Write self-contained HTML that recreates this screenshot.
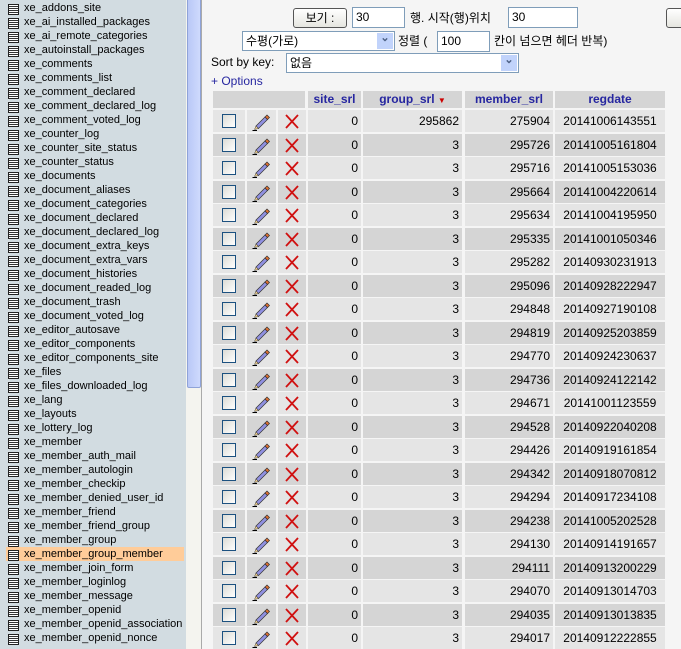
<!DOCTYPE html>
<html><head><meta charset="utf-8"><style>
*{margin:0;padding:0;box-sizing:border-box}
html,body{width:681px;height:649px;overflow:hidden}
body{position:relative;background:#f5f5f5;font-family:"Liberation Sans","Noto Sans CJK KR",sans-serif;font-size:11px;color:#000}
#left{position:absolute;left:0;top:0;width:186px;height:649px;background:#d2dce1;overflow:hidden}
#left div{position:absolute;left:6px;width:178px;height:14px;line-height:14px;padding-left:18px;white-space:nowrap}
#left div:before{content:"";position:absolute;left:2px;top:3px;width:9px;height:9px;border:1px solid #222;background:repeating-linear-gradient(#fff 0 1px,#333 1px 2px);}
#left div.hl{background:#ffcc99}
#sb{position:absolute;left:186px;top:0;width:16px;height:649px;background:#f4f4ef;border-right:1px solid #aaa}
#thumb{position:absolute;left:1px;top:-2px;width:14px;height:390px;background:linear-gradient(90deg,#b9c8f7,#cfdafd);border:1px solid #8fa3d8;border-radius:2px}
.a{position:absolute;white-space:nowrap}
.inp{position:absolute;background:#fff;border:1px solid #7f9db9;height:21px;line-height:19px;padding-left:3px;font-size:12px}
.btn{position:absolute;border:1px solid #555;border-radius:3px;background:linear-gradient(#fff,#e6e6e0);text-align:center;font-size:12px;line-height:18px}
.sel{position:absolute;background:#fff;border:1px solid #7f9db9;height:20px;line-height:18px;padding-left:3px;font-size:12px}
.sel:after{content:"⌄";position:absolute;right:1px;top:1px;width:16px;height:16px;background:#c1d3fb;color:#4d6185;font-size:11px;line-height:10px;text-align:center;font-weight:bold}
.r{position:absolute;left:213px;height:22px;width:453px}
.c{position:absolute;top:0;height:22px;line-height:22px;font-size:12px;text-align:right;padding-right:3px}
.r.o .c{background:#e5e5e5}.r.e .c{background:#d5d5d5}
.h{position:absolute;top:91px;height:17px;line-height:17px;background:#d5d5d5;color:#2626a0;font-weight:bold;font-size:12px;text-align:center}
.cb{position:absolute;left:9px;top:4px;width:14px;height:14px;border:1px solid #1c5180;background:linear-gradient(135deg,#dcdcd6,#fff)}
</style></head><body>
<div id="left">
<div style="top:1px">xe_addons_site</div><div style="top:15px">xe_ai_installed_packages</div><div style="top:29px">xe_ai_remote_categories</div><div style="top:43px">xe_autoinstall_packages</div><div style="top:57px">xe_comments</div><div style="top:71px">xe_comments_list</div><div style="top:85px">xe_comment_declared</div><div style="top:99px">xe_comment_declared_log</div><div style="top:113px">xe_comment_voted_log</div><div style="top:127px">xe_counter_log</div><div style="top:141px">xe_counter_site_status</div><div style="top:155px">xe_counter_status</div><div style="top:169px">xe_documents</div><div style="top:183px">xe_document_aliases</div><div style="top:197px">xe_document_categories</div><div style="top:211px">xe_document_declared</div><div style="top:225px">xe_document_declared_log</div><div style="top:239px">xe_document_extra_keys</div><div style="top:253px">xe_document_extra_vars</div><div style="top:267px">xe_document_histories</div><div style="top:281px">xe_document_readed_log</div><div style="top:295px">xe_document_trash</div><div style="top:309px">xe_document_voted_log</div><div style="top:323px">xe_editor_autosave</div><div style="top:337px">xe_editor_components</div><div style="top:351px">xe_editor_components_site</div><div style="top:365px">xe_files</div><div style="top:379px">xe_files_downloaded_log</div><div style="top:393px">xe_lang</div><div style="top:407px">xe_layouts</div><div style="top:421px">xe_lottery_log</div><div style="top:435px">xe_member</div><div style="top:449px">xe_member_auth_mail</div><div style="top:463px">xe_member_autologin</div><div style="top:477px">xe_member_checkip</div><div style="top:491px">xe_member_denied_user_id</div><div style="top:505px">xe_member_friend</div><div style="top:519px">xe_member_friend_group</div><div style="top:533px">xe_member_group</div><div class="hl" style="top:547px">xe_member_group_member</div><div style="top:561px">xe_member_join_form</div><div style="top:575px">xe_member_loginlog</div><div style="top:589px">xe_member_message</div><div style="top:603px">xe_member_openid</div><div style="top:617px">xe_member_openid_association</div><div style="top:631px">xe_member_openid_nonce</div>
</div>
<div id="sb"><div id="thumb"></div></div>

<div class="btn" style="left:293px;top:8px;width:54px;height:20px">보기 :</div>
<div class="inp" style="left:352px;top:7px;width:53px">30</div>
<div class="a" style="left:410px;top:9px;font-size:12px">행. 시작(행)위치</div>
<div class="inp" style="left:508px;top:7px;width:70px">30</div>
<div class="btn" style="left:666px;top:8px;width:30px;height:20px"></div>
<div class="sel" style="left:242px;top:31px;width:153px">수평(가로)</div>
<div class="a" style="left:398px;top:32px;font-size:12px">정렬 (</div>
<div class="inp" style="left:437px;top:31px;width:53px">100</div>
<div class="a" style="left:494px;top:32px;font-size:12px">칸이 넘으면 헤더 반복)</div>
<div class="a" style="left:211px;top:55px;font-size:12px">Sort by key:</div>
<div class="sel" style="left:286px;top:53px;width:233px">없음</div>
<div class="a" style="left:211px;top:74px;font-size:12px;color:#2626a0">+ Options</div>

<div class="h" style="left:213px;width:92px"></div>
<div class="h" style="left:308px;width:53px">site_srl</div>
<div class="h" style="left:363px;width:99px">group_srl <span style="color:#c00;font-size:8px">▼</span></div>
<div class="h" style="left:465px;width:88px">member_srl</div>
<div class="h" style="left:555px;width:110px">regdate</div>

<svg width="0" height="0" style="position:absolute"><defs>
<g id="pen"><path d="M4 15 L13 6 L15.5 8.5 L6.5 17.5 Z" fill="#9090e0" stroke="#333" stroke-width="0.7"/><path d="M13 6 L15 4 L17.5 6.5 L15.5 8.5 Z" fill="#e07030" stroke="#333" stroke-width="0.7"/><path d="M4 15 L6.5 17.5 L2.5 18.5 Z" fill="#f0d090" stroke="#333" stroke-width="0.5"/><path d="M0.5 19.5 H5" stroke="#000" stroke-width="1"/></g>
<g id="x"><path d="M2 4 L14 17 M14 4 L2 17" stroke="#d01010" stroke-width="1.8"/></g>
</defs></svg>

<div id="rows"></div>
<script>
var d=[["0","295862","275904","20141006143551"],["3","295726","20141005161804"],["3","295716","20141005153036"],["3","295664","20141004220614"],["3","295634","20141004195950"],["3","295335","20141001050346"],["3","295282","20140930231913"],["3","295096","20140928222947"],["3","294848","20140927190108"],["3","294819","20140925203859"],["3","294770","20140924230637"],["3","294736","20140924122142"],["3","294671","20141001123559"],["3","294528","20140922040208"],["3","294426","20140919161854"],["3","294342","20140918070812"],["3","294294","20140917234108"],["3","294238","20141005202528"],["3","294130","20140914191657"],["3","294111","20140913200229"],["3","294070","20140913014703"],["3","294035","20140913013835"],["3","294017","20140912222855"]];
var h="";
for(var i=0;i<d.length;i++){var r=d[i];if(r.length==3)r=["0",r[0],r[1],r[2]];var t=Math.round(110+i*23.5);
h+='<div class="r '+(i%2?'e':'o')+'" style="top:'+t+'px">'+
'<div class="c" style="left:0;width:32px"><div class="cb"></div></div>'+
'<div class="c" style="left:34px;width:29px"><svg width="20" height="22" style="position:absolute;left:5px;top:1px"><use href="#pen"/></svg></div>'+
'<div class="c" style="left:65px;width:28px"><svg width="16" height="20" style="position:absolute;left:6px;top:1px"><use href="#x"/></svg></div>'+
'<div class="c" style="left:95px;width:53px">'+r[0]+'</div>'+
'<div class="c" style="left:150px;width:99px">'+r[1]+'</div>'+
'<div class="c" style="left:252px;width:88px">'+r[2]+'</div>'+
'<div class="c" style="left:342px;width:110px;text-align:center;padding:0">'+r[3]+'</div></div>';}
document.getElementById("rows").innerHTML=h;
</script>
</body></html>
